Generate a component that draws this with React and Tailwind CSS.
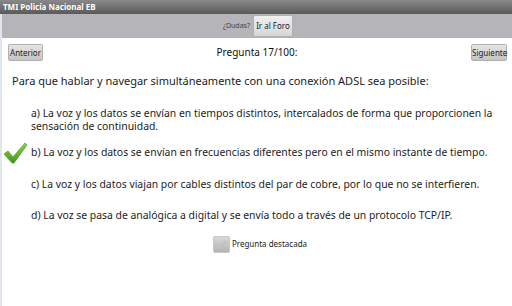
import React, { useState } from "react";

const options = [
  "a) La voz y los datos se envían en tiempos distintos, intercalados de forma que proporcionen la sensación de continuidad.",
  "b) La voz y los datos se envían en frecuencias diferentes pero en el mismo instante de tiempo.",
  "c) La voz y los datos viajan por cables distintos del par de cobre, por lo que no se interfieren.",
  "d) La voz se pasa de analógica a digital y se envía todo a través de un protocolo TCP/IP.",
];

function Check() {
  return (
    <svg width="25" height="24" viewBox="0 0 25 24">
      <defs>
        <linearGradient id="g" x1="0" y1="0" x2="0" y2="1">
          <stop offset="0" stopColor="#8fd44a" />
          <stop offset="1" stopColor="#3d9a1c" />
        </linearGradient>
      </defs>
      <path
        d="M1 13 L5 10 L10 16 L22 2 L24 4 L11 22 L9 22 Z"
        fill="url(#g)"
        stroke="#3a8a1a"
        strokeWidth="0.6"
        strokeLinejoin="round"
      />
    </svg>
  );
}

function GrayButton({ children, className = "" }) {
  return (
    <button
      className={`bg-gradient-to-b from-[#e6e6e6] to-[#c4c4c4] border border-[#b0b0b0] rounded-[2px] text-[8px] text-[#222] leading-none ${className}`}
    >
      {children}
    </button>
  );
}

export default function App() {
  const [starred, setStarred] = useState(false);
  const correct = 1;

  return (
    <div className="w-[512px] h-[306px] bg-white flex flex-col overflow-hidden font-['Noto_Sans',sans-serif]">
      {/* barra de titulo */}
      <div className="h-[14px] bg-gradient-to-b from-[#8a8a8a] to-[#5a5a5a] px-[3px] flex items-center">
        <span className="text-[8px] font-bold text-white leading-none">TMI Policía Nacional EB</span>
      </div>

      <div className="flex-1 flex border-l-2 border-[#dfe6ef]">
        <div className="flex-1 flex flex-col">
          {/* foro */}
          <div className="h-[24px] bg-[#b5b4b9] flex items-center justify-end pr-[219px] gap-[3px]">
            <span className="text-[7px] text-[#444]">¿Dudas?</span>
            <GrayButton className="w-[40px] h-[22px] bg-gradient-to-b from-[#f0f0f0] to-[#d6d6d6] border-[#9a9a9a]">
              Ir al Foro
            </GrayButton>
          </div>

          {/* navegacion */}
          <div className="flex items-center justify-between pl-[6px] pr-[5px] mt-[6px] h-[17px]">
            <GrayButton className="w-[35px] h-[17px]">Anterior</GrayButton>
            <span className="text-[10px] text-[#111]">Pregunta 17/100:</span>
            <GrayButton className="w-[36px] h-[17px]">Siguiente</GrayButton>
          </div>

          <p className="mt-[13px] pl-[10px] text-[11px] leading-[13px] text-[#222]">
            Para que hablar y navegar simultáneamente con una conexión ADSL sea posible:
          </p>

          <div className="mt-[20px] flex flex-col gap-[7.5px]">
            {options.map((o, i) => (
              <div key={i} className="flex items-center min-h-[24px] pr-[14px]">
                <div className="w-[29px] shrink-0 flex justify-start pl-[1px]">
                  {i === correct && <Check />}
                </div>
                <p className="text-[10.4px] leading-[13px] text-[#222]">{o}</p>
              </div>
            ))}
          </div>

          <label className="mt-[8px] flex items-center justify-center gap-[2px] pl-[6px] cursor-pointer">
            <span
              onClick={() => setStarred(!starred)}
              className="w-[17px] h-[17px] rounded-[2px] bg-gradient-to-b from-[#d8d8d8] to-[#b4b4b4] border border-[#c8c8c8] flex items-center justify-center"
            >
              <svg width="13" height="13" viewBox="0 0 13 13">
                <path d="M2 7 L5 10 L11 3" fill="none" stroke={starred ? "#3d9a1c" : "#c2c2c2"} strokeWidth="2" />
              </svg>
            </span>
            <span className="text-[8px] text-[#222]">Pregunta destacada</span>
          </label>
        </div>
      </div>
    </div>
  );
}
